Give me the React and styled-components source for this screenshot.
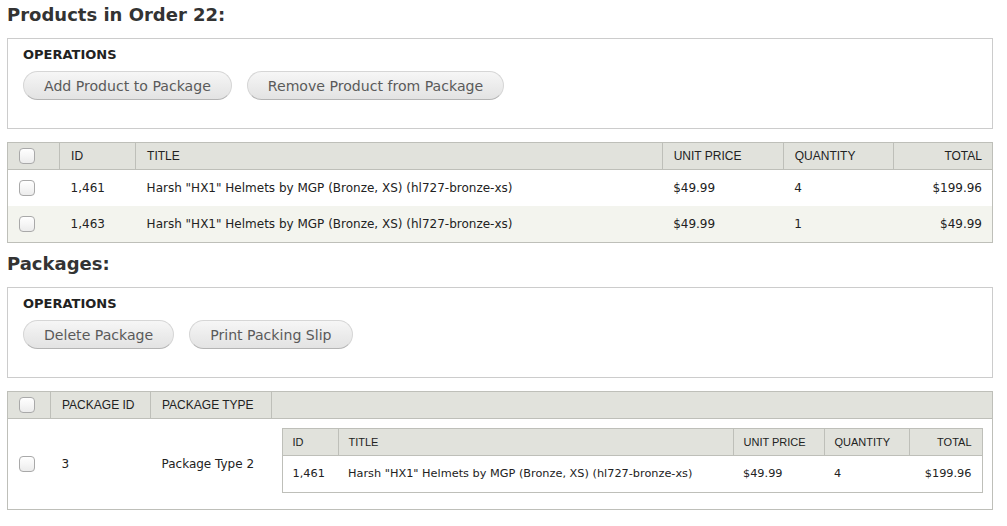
import React from "react";
import styled, { createGlobalStyle } from "styled-components";

const Global = createGlobalStyle`
  html, body { margin: 0; padding: 0; background: #fff; }
  body {
    font-family: "DejaVu Sans", "Noto Sans", sans-serif;
    color: #333;
  }
`;

const Page = styled.div`
  padding: 4px 14px 16px 7px;
`;

const Heading = styled.h2`
  margin: ${(p) => (p.$first ? "0" : "10px")} 0 12px 0;
  font-size: 18px;
  line-height: 22px;
  font-weight: bold;
  color: #333;
`;

const Fieldset = styled.div`
  border: 1px solid #ccc;
  padding: 6px 15px 28px;
`;

const Legend = styled.div`
  font-size: 13px;
  line-height: 20px;
  font-weight: bold;
  text-transform: uppercase;
  color: #222;
`;

const ButtonRow = styled.div`
  display: flex;
  gap: 15px;
  margin-top: 6px;
`;

const Button = styled.button`
  box-sizing: border-box;
  height: 29px;
  padding: 0 20px;
  font-family: "DejaVu Sans", sans-serif;
  font-size: 14.1px;
  color: #5a5a5a;
  background: linear-gradient(to bottom, #f6f6f6 0%, #ebebeb 55%, #e3e3e3 100%);
  border: 1px solid #d6d6d6;
  border-bottom-color: #b4b4b4;
  border-radius: 20px;
  cursor: pointer;
`;

const Table = styled.table`
  width: 100%;
  border-collapse: collapse;
  table-layout: fixed;
  border: 1px solid #bebfb9;
  margin-top: ${(p) => p.$mt || 0}px;
`;

const Th = styled.th`
  background: #e1e2dc;
  border: 1px solid #bebfb9;
  font-family: "Liberation Sans", Arial, sans-serif;
  font-weight: normal;
  text-transform: uppercase;
  font-size: ${(p) => (p.$small ? 11 : 12)}px;
  line-height: 18px;
  padding: 4px 10px 4px ${(p) => (p.$small ? 10 : 11)}px;
  color: #222;
  text-align: ${(p) => (p.$right ? "right" : "left")};
  white-space: nowrap;
`;

const Tr = styled.tr`
  background: ${(p) => (p.$even ? "#f3f4ee" : "#fff")};
`;

const Td = styled.td`
  font-size: ${(p) => (p.$small ? "11.3px" : "12px")};
  line-height: 18px;
  padding: 9px 10px 9px ${(p) => (p.$small ? 10 : 11)}px;
  color: #222;
  vertical-align: middle;
  text-align: ${(p) => (p.$right ? "right" : "left")};
  white-space: nowrap;
`;

const NestCell = styled.td`
  padding: 9px 10px 16px 10px;
  vertical-align: top;
`;

const Check = styled.input.attrs({ type: "checkbox" })`
  appearance: none;
  -webkit-appearance: none;
  display: block;
  box-sizing: border-box;
  width: 16px;
  height: 16px;
  margin: 0;
  border: 1px solid #a9a9a9;
  border-radius: 4px;
  background: linear-gradient(to bottom, #ffffff 0%, #ececec 100%);
`;

const products = [
  { id: "1,461", title: 'Harsh "HX1" Helmets by MGP (Bronze, XS) (hl727-bronze-xs)', price: "$49.99", qty: "4", total: "$199.96" },
  { id: "1,463", title: 'Harsh "HX1" Helmets by MGP (Bronze, XS) (hl727-bronze-xs)', price: "$49.99", qty: "1", total: "$49.99" },
];

function Operations({ labels }) {
  return (
    <Fieldset>
      <Legend>Operations</Legend>
      <ButtonRow>
        {labels.map((l) => (
          <Button key={l}>{l}</Button>
        ))}
      </ButtonRow>
    </Fieldset>
  );
}

export default function App() {
  return (
    <>
      <Global />
      <Page>
        <Heading $first>Products in Order 22:</Heading>
        <Operations labels={["Add Product to Package", "Remove Product from Package"]} />
        <Table $mt={13}>
          <colgroup>
            <col style={{ width: 52 }} />
            <col style={{ width: 76 }} />
            <col style={{ width: 526 }} />
            <col style={{ width: 121 }} />
            <col style={{ width: 110 }} />
            <col style={{ width: 99 }} />
          </colgroup>
          <thead>
            <tr>
              <Th><Check /></Th>
              <Th>ID</Th>
              <Th>Title</Th>
              <Th>Unit Price</Th>
              <Th>Quantity</Th>
              <Th $right>Total</Th>
            </tr>
          </thead>
          <tbody>
            {products.map((p, i) => (
              <Tr key={p.id} $even={i % 2 === 1}>
                <Td><Check /></Td>
                <Td>{p.id}</Td>
                <Td>{p.title}</Td>
                <Td>{p.price}</Td>
                <Td>{p.qty}</Td>
                <Td $right>{p.total}</Td>
              </Tr>
            ))}
          </tbody>
        </Table>

        <Heading>Packages:</Heading>
        <Operations labels={["Delete Package", "Print Packing Slip"]} />
        <Table $mt={13}>
          <colgroup>
            <col style={{ width: 43 }} />
            <col style={{ width: 100 }} />
            <col style={{ width: 121 }} />
            <col />
          </colgroup>
          <thead>
            <tr>
              <Th><Check /></Th>
              <Th>Package ID</Th>
              <Th>Package Type</Th>
              <Th></Th>
            </tr>
          </thead>
          <tbody>
            <Tr>
              <Td><Check /></Td>
              <Td>3</Td>
              <Td>Package Type 2</Td>
              <NestCell>
                <Table>
                  <colgroup>
                    <col style={{ width: 56 }} />
                    <col style={{ width: 395 }} />
                    <col style={{ width: 91 }} />
                    <col style={{ width: 85 }} />
                    <col style={{ width: 73 }} />
                  </colgroup>
                  <thead>
                    <tr>
                      <Th $small>ID</Th>
                      <Th $small>Title</Th>
                      <Th $small>Unit Price</Th>
                      <Th $small>Quantity</Th>
                      <Th $small $right>Total</Th>
                    </tr>
                  </thead>
                  <tbody>
                    <Tr>
                      <Td $small>1,461</Td>
                      <Td $small>Harsh "HX1" Helmets by MGP (Bronze, XS) (hl727-bronze-xs)</Td>
                      <Td $small>$49.99</Td>
                      <Td $small>4</Td>
                      <Td $small $right>$199.96</Td>
                    </Tr>
                  </tbody>
                </Table>
              </NestCell>
            </Tr>
          </tbody>
        </Table>
      </Page>
    </>
  );
}
